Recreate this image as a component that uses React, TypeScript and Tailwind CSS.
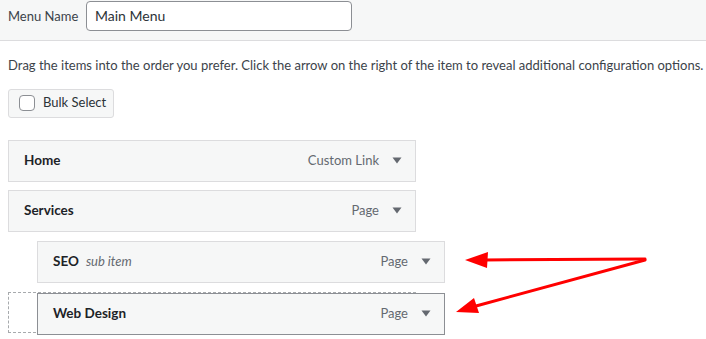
import React from "react";

const Caret = () => (
  <svg width="10" height="7" viewBox="0 0 10 7" className="ml-[13px] mr-[13px]">
    <path d="M0.5 0.5 L9.5 0.5 L5 6.5 Z" fill="#646970" />
  </svg>
);

function Item({
  title,
  type,
  sub,
  active,
}: {
  title: string;
  type: string;
  sub?: string;
  active?: boolean;
}) {
  return (
    <div
      className={
        "flex h-[42px] w-[408px] items-center border bg-[#f6f7f7] pl-[15px] " +
        (active ? "border-[#8c8f94]" : "border-[#dcdcde]")
      }
    >
      <span className="text-[13.5px] font-bold text-[#1d2327]">{title}</span>
      {sub && <span className="ml-[7px] italic text-[#646970]">{sub}</span>}
      <span className="ml-auto text-[#646970]">{type}</span>
      <Caret />
    </div>
  );
}

export default function App() {
  return (
    <div
      className="relative h-[339px] w-[706px] overflow-hidden bg-white text-[13px] leading-[19.5px] text-[#3c434a]"
      style={{ fontFamily: 'Lato, "Liberation Sans", sans-serif' }}
    >
      <div className="flex h-[41px] items-start border-b border-[#dcdcde] bg-[#f6f7f7] pl-[8px] pt-[1px]">
        <span className="mt-[6px] w-[78px] text-[13px] text-[#3c434a]">Menu Name</span>
        <div className="flex h-[30px] w-[266px] items-center rounded-[4px] border border-[#8c8f94] bg-white pl-[8px] text-[14px] text-[#2c3338]">
          Main Menu
        </div>
      </div>
      <div className="px-[8px]">
        <p className="mt-[15px] whitespace-nowrap">
          Drag the items into the order you prefer. Click the arrow on the right of the item to reveal additional configuration options.
        </p>
        <div className="mt-[13px] flex h-[29px] w-[106px] items-center rounded-[3px] border border-[#dcdcde] bg-[#f6f7f7] pl-[10px]">
          <span className="h-[16px] w-[16px] rounded-[4px] border border-[#8c8f94] bg-white" />
          <span className="ml-[8px] text-[#2c3338]">Bulk Select</span>
        </div>
        <div className="mt-[22px] flex flex-col">
          <Item title="Home" type="Custom Link" />
          <div className="mt-[8px]">
            <Item title="Services" type="Page" />
          </div>
          <div className="ml-[29px] mt-[9px]">
            <Item title="SEO" type="Page" sub="sub item" />
          </div>
          <div className="relative mt-[9px] h-[41px] w-[408px] border border-dashed border-[#a7aaad]">
            <div className="absolute left-[28px] top-[0px]">
              <Item title="Web Design" type="Page" active />
            </div>
          </div>
        </div>
      </div>
      <svg
        className="pointer-events-none absolute left-0 top-0"
        width="706"
        height="339"
        viewBox="0 0 706 339"
      >
        <line x1="645" y1="259" x2="484" y2="260" stroke="#ff0000" strokeWidth="3" strokeLinecap="round" />
        <path d="M465 260 L488 252 L487 268 Z" fill="#ff0000" />
        <line x1="645" y1="260" x2="476" y2="306" stroke="#ff0000" strokeWidth="3" strokeLinecap="round" />
        <path d="M456 312 L474 298 L479 313 Z" fill="#ff0000" />
      </svg>
    </div>
  );
}
